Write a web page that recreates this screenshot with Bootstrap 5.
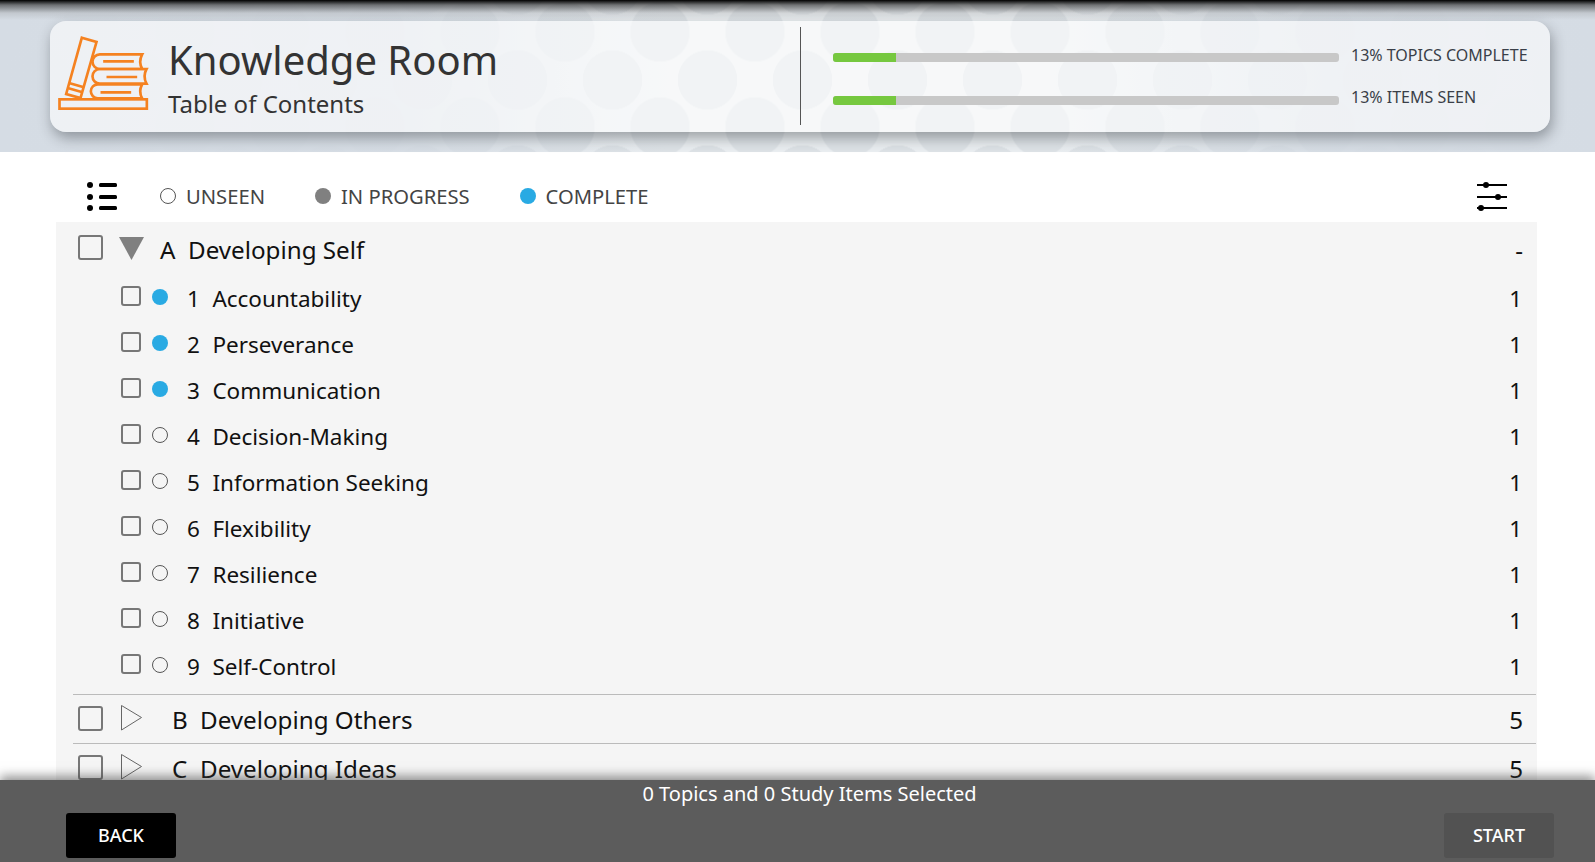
<!DOCTYPE html>
<html lang="en">
<head>
    <meta charset="UTF-8">
    <meta name="viewport" content="width=device-width, initial-scale=1.0">
    <title>Knowledge Room</title>
    <link href="https://cdn.jsdelivr.net/npm/bootstrap@5.3.0/dist/css/bootstrap.min.css" rel="stylesheet">
    <style>
        html, body {
            height: 100%;
        }
        body {
            font-family: "Noto Sans", sans-serif;
            color: #111;
            overflow: hidden;
        }
        .kr-page {
            height: 100vh;
        }
        .kr-banner {
            height: 152px;
            flex: none;
            padding: 21px 45px 20px 50px;
            background-color: #eaeef1;
            background-image:
                linear-gradient(to bottom, #000 0, rgba(40,40,40,.6) 5px, rgba(120,120,120,.2) 13px, rgba(120,120,120,0) 20px),
                linear-gradient(to right, #d5dce4 0, rgba(213,220,228,.9) 25%, rgba(213,220,228,0) 42%, rgba(213,220,228,0) 66%, rgba(213,220,228,.9) 84%, #d5dce4 100%),
                radial-gradient(circle at center, #dde2e6 29.500px, transparent 30px),
                radial-gradient(circle at center, #dde2e6 29.500px, transparent 30px);
            background-size: auto, auto, 95px 95px, 95px 95px;
            background-position: 0 0, 0 0, 42.500px -15.500px, -5px 32.500px;
        }
        .kr-banner-card {
            height: 111px;
            border-radius: 16px;
            background: rgba(255,255,255,.6);
            box-shadow: 2px 6px 14px rgba(30,35,40,.38);
        }
        .kr-logo {
            width: 92px;
            height: 76px;
            margin: 14px 19px 0 7px;
            flex: none;
        }
        .kr-heading {
            width: 632px;
            height: 100%;
            flex: none;
            color: #333;
        }
        .kr-title {
            font-size: 40px;
            line-height: 50px;
            margin: 14px 0 0;
            font-weight: 400;
        }
        .kr-subtitle {
            font-size: 24px;
            line-height: 30px;
            margin: 4px 0 0;
        }
        .kr-rule {
            width: 1px;
            height: 98px;
            margin-top: 6px;
            background: #555;
            flex: none;
        }
        .kr-stats {
            padding: 21px 0 0 32px;
            font-size: 16px;
            color: #3a3f48;
        }
        .kr-stat {
            height: 43px;
        }
        .kr-stat .progress {
            width: 506px;
            height: 9px;
            margin: 11px 12px 0 0;
            background: #c8c8c8;
            border-radius: 3px;
        }
        .kr-stat .progress-bar {
            background: #76c83f;
        }
        .kr-stat span {
            line-height: 22px;
            margin-top: 2px;
        }
        .kr-stat + .kr-stat span {
            margin-top: 1px;
        }
        .kr-legend {
            height: 70px;
            flex: none;
            padding: 20px 88px 0 87px;
            font-size: 20.2px;
            color: #444;
        }
        .kr-legend-items {
            margin: -2px 0 0 43px;
            gap: 50px;
        }
        .kr-legend-item {
            gap: 10px;
        }
        .kr-dot {
            display: inline-block;
            width: 16px;
            height: 16px;
            border-radius: 50%;
            flex: none;
        }
        .kr-dot-unseen {
            border: 1.5px solid #555;
        }
        .kr-dot-progress {
            background: #808080;
        }
        .kr-dot-complete {
            background: #29aae3;
        }
        .kr-panel {
            margin: 0 58px 0 56px;
            min-height: 0;
            background: #f5f5f5;
            overflow: hidden;
        }
        .kr-section {
            padding: 2px 14px 0 22px;
            font-size: 24.2px;
            height: 48px;
        }
        .kr-section-open {
            height: 54px;
        }
        .kr-section-line {
            border-top: 1px solid #bbb;
            margin-left: 17px;
            padding: 2px 13px 0 5px;
            margin-right: 1px;
            height: 49px;
        }
        .kr-topics {
            padding-bottom: 4.500px;
        }
        .kr-topic {
            height: 45.950px;
            padding: 0 15px 0 65px;
            font-size: 22.500px;
        }
        .form-check-input.kr-check {
            width: 25px;
            height: 25px;
            margin: -5px 0 0;
            flex: none;
            background-color: #f5f5f5;
            border: 2px solid #777;
            border-radius: 3px;
        }
        .kr-section-line .form-check-input.kr-check {
            margin-top: -3px;
        }
        .form-check-input.kr-check-sm {
            width: 20px;
            height: 20px;
            margin: -5px 11px 0 0;
        }
        .kr-topic .kr-dot {
            margin: -3px 19px 0 0;
        }
        .kr-arrow {
            width: 26px;
            height: 26px;
            margin: -5px 0 0 16px;
            flex: none;
        }
        .kr-section-line .kr-arrow {
            margin: -3px 0 0 18px;
        }
        .kr-letter {
            width: 28px;
            margin-left: 15px;
            flex: none;
        }
        .kr-letter-far {
            margin-left: 25px;
        }
        .kr-num {
            width: 25.400px;
            flex: none;
        }
        .kr-footer {
            height: 82px;
            flex: none;
            position: relative;
            background: #5c5c5c;
            color: #fff;
            font-size: 20px;
            box-shadow: 0 -4px 10px rgba(60,60,60,.55);
        }
        .kr-footer p {
            line-height: 28px;
            margin: 0 0 5px;
            padding-left: 24px;
        }
        .kr-actions {
            padding: 0 41px 0 66px;
        }
        .btn.kr-btn {
            width: 110px;
            height: 45px;
            padding: 0;
            border: 0;
            border-radius: 3px;
            font-size: 18px;
            font-weight: 500;
            color: #fff;
        }
        .kr-back {
            background: #000;
        }
        .kr-start {
            background: #525252;
        }
    </style>
</head>
<body>
    <div class="kr-page d-flex flex-column">
        <header class="kr-banner">
            <div class="kr-banner-card d-flex">
                <svg class="kr-logo" viewBox="50 45 275 228" fill="none" stroke="#f58220" stroke-width="8">
                    <rect x="57" y="238" width="262" height="28"/>
                    <path d="M124 53 168 66 120 234 77 222Z"/>
                    <path d="M88 190 130 202M84 205 126 217"/>
                    <path d="M305 103H178a22 22 0 0 0 0 44H305c-8-15-8-29 0-44Z"/>
                    <path d="M318 147H178a22 22 0 0 0 0 44H318c-8-15-8-29 0-44Z"/>
                    <path d="M305 193H172a21 21 0 0 0 0 42H305c-8-14-8-28 0-42Z"/>
                    <path d="M188 124H280M198 171H290M180 217H272"/>
                </svg>
                <div class="kr-heading">
                    <h1 class="kr-title">Knowledge Room</h1>
                    <p class="kr-subtitle">Table of Contents</p>
                </div>
                <div class="kr-rule"></div>
                <div class="kr-stats flex-grow-1">
                    <div class="kr-stat d-flex">
                        <div class="progress"><div class="progress-bar" style="width: 12.5%"></div></div>
                        <span>13% TOPICS COMPLETE</span>
                    </div>
                    <div class="kr-stat d-flex">
                        <div class="progress"><div class="progress-bar" style="width: 12.5%"></div></div>
                        <span>13% ITEMS SEEN</span>
                    </div>
                </div>
            </div>
        </header>

        <div class="kr-legend d-flex align-items-center">
            <svg width="30" height="30" viewBox="0 0 30 30" fill="#000">
                <circle cx="3" cy="3" r="3"/><circle cx="3" cy="15" r="3"/><circle cx="3" cy="26" r="3"/>
                <rect x="12" y="1" width="18" height="4" rx="1.5"/><rect x="12" y="13" width="18" height="4" rx="1.5"/><rect x="12" y="24" width="18" height="4" rx="1.5"/>
            </svg>
            <div class="kr-legend-items d-flex">
                <div class="kr-legend-item d-flex align-items-center"><span class="kr-dot kr-dot-unseen"></span>UNSEEN</div>
                <div class="kr-legend-item d-flex align-items-center"><span class="kr-dot kr-dot-progress"></span>IN PROGRESS</div>
                <div class="kr-legend-item d-flex align-items-center"><span class="kr-dot kr-dot-complete"></span>COMPLETE</div>
            </div>
            <svg class="ms-auto" width="30" height="30" viewBox="0 0 30 30" stroke="#000" stroke-width="2" fill="#000">
                <path d="M0 3H30M0 15H30M0 26H30"/>
                <circle cx="9" cy="3" r="3" stroke="none"/><circle cx="21" cy="15" r="3" stroke="none"/><circle cx="4" cy="26" r="3" stroke="none"/>
            </svg>
        </div>

        <main class="kr-panel flex-grow-1">
            <div class="kr-section kr-section-open d-flex align-items-center">
                <input class="form-check-input kr-check" type="checkbox">
                <svg class="kr-arrow" viewBox="0 0 26 26"><path d="M0 2H25L12.500 25Z" fill="#808080"/></svg>
                <span class="kr-letter">A</span>
                <span>Developing Self</span>
                <span class="ms-auto">-</span>
            </div>
            <div class="kr-topics">
                <div class="kr-topic d-flex align-items-center">
                    <input class="form-check-input kr-check kr-check-sm" type="checkbox">
                    <span class="kr-dot kr-dot-complete"></span>
                    <span class="kr-num">1</span><span>Accountability</span><span class="ms-auto">1</span>
                </div>
                <div class="kr-topic d-flex align-items-center">
                    <input class="form-check-input kr-check kr-check-sm" type="checkbox">
                    <span class="kr-dot kr-dot-complete"></span>
                    <span class="kr-num">2</span><span>Perseverance</span><span class="ms-auto">1</span>
                </div>
                <div class="kr-topic d-flex align-items-center">
                    <input class="form-check-input kr-check kr-check-sm" type="checkbox">
                    <span class="kr-dot kr-dot-complete"></span>
                    <span class="kr-num">3</span><span>Communication</span><span class="ms-auto">1</span>
                </div>
                <div class="kr-topic d-flex align-items-center">
                    <input class="form-check-input kr-check kr-check-sm" type="checkbox">
                    <span class="kr-dot kr-dot-unseen"></span>
                    <span class="kr-num">4</span><span>Decision-Making</span><span class="ms-auto">1</span>
                </div>
                <div class="kr-topic d-flex align-items-center">
                    <input class="form-check-input kr-check kr-check-sm" type="checkbox">
                    <span class="kr-dot kr-dot-unseen"></span>
                    <span class="kr-num">5</span><span>Information Seeking</span><span class="ms-auto">1</span>
                </div>
                <div class="kr-topic d-flex align-items-center">
                    <input class="form-check-input kr-check kr-check-sm" type="checkbox">
                    <span class="kr-dot kr-dot-unseen"></span>
                    <span class="kr-num">6</span><span>Flexibility</span><span class="ms-auto">1</span>
                </div>
                <div class="kr-topic d-flex align-items-center">
                    <input class="form-check-input kr-check kr-check-sm" type="checkbox">
                    <span class="kr-dot kr-dot-unseen"></span>
                    <span class="kr-num">7</span><span>Resilience</span><span class="ms-auto">1</span>
                </div>
                <div class="kr-topic d-flex align-items-center">
                    <input class="form-check-input kr-check kr-check-sm" type="checkbox">
                    <span class="kr-dot kr-dot-unseen"></span>
                    <span class="kr-num">8</span><span>Initiative</span><span class="ms-auto">1</span>
                </div>
                <div class="kr-topic d-flex align-items-center">
                    <input class="form-check-input kr-check kr-check-sm" type="checkbox">
                    <span class="kr-dot kr-dot-unseen"></span>
                    <span class="kr-num">9</span><span>Self-Control</span><span class="ms-auto">1</span>
                </div>
            </div>
            <div class="kr-section kr-section-line d-flex align-items-center">
                <input class="form-check-input kr-check" type="checkbox">
                <svg class="kr-arrow" viewBox="0 0 26 26"><path d="M.5.5 20.500 12.500.5 25Z" fill="none" stroke="#666"/></svg>
                <span class="kr-letter kr-letter-far">B</span>
                <span>Developing Others</span>
                <span class="ms-auto">5</span>
            </div>
            <div class="kr-section kr-section-line d-flex align-items-center">
                <input class="form-check-input kr-check" type="checkbox">
                <svg class="kr-arrow" viewBox="0 0 26 26"><path d="M.5.5 20.500 12.500.5 25Z" fill="none" stroke="#666"/></svg>
                <span class="kr-letter kr-letter-far">C</span>
                <span>Developing Ideas</span>
                <span class="ms-auto">5</span>
            </div>
        </main>

        <footer class="kr-footer text-center">
            <p>0 Topics and 0 Study Items Selected</p>
            <div class="kr-actions d-flex justify-content-between">
                <button type="button" class="btn kr-btn kr-back">BACK</button>
                <button type="button" class="btn kr-btn kr-start">START</button>
            </div>
        </footer>
    </div>

    <script src="https://cdn.jsdelivr.net/npm/bootstrap@5.3.0/dist/js/bootstrap.bundle.min.js"></script>
</body>
</html>
